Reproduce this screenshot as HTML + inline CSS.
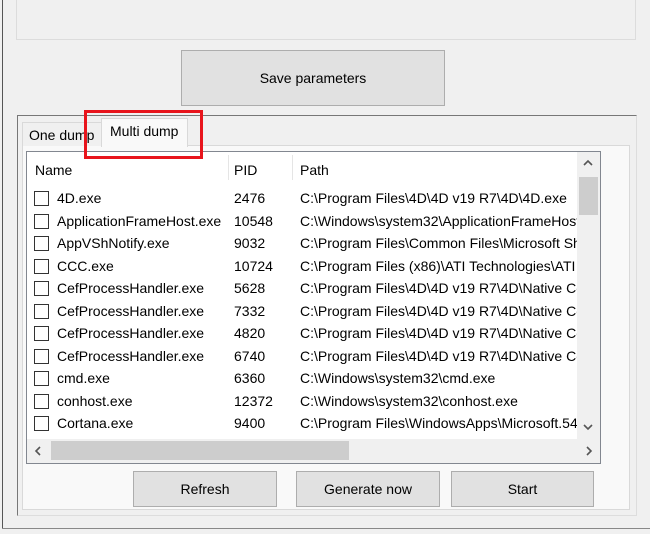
<!DOCTYPE html>
<html><head><style>
body{margin:0;width:650px;height:534px;background:#f0f0f0;position:relative;overflow:hidden;font-family:"Liberation Sans",sans-serif;font-size:14px;color:#000}
.a{position:absolute}
.btn{position:absolute;background:#e1e1e1;border:1px solid #adadad;box-sizing:border-box;display:flex;align-items:center;justify-content:center;font-size:14px}
.row{position:absolute;left:0;height:22px;width:560px}
.row span{position:absolute;top:3px;white-space:nowrap}
.cb{position:absolute;left:7px;top:4px;width:13px;height:13px;border:1px solid #333;background:#fff}
</style></head><body>
<div class="a" style="left:2px;top:0;width:1px;height:529px;background:#555"></div>
<div class="a" style="left:2px;top:528px;width:648px;height:1px;background:#888"></div>
<div class="a" style="left:16px;top:-2px;width:620px;height:42px;border:1px solid #dcdcdc;box-sizing:border-box"></div>
<div class="btn" style="left:181px;top:50px;width:264px;height:56px">Save parameters</div>
<div class="a" style="left:17px;top:115px;width:620px;height:401px;border-top:1px solid #777;border-left:1px solid #777;border-right:1px solid #ddd;border-bottom:1px solid #ddd;box-sizing:border-box"></div>
<div class="a" style="left:22px;top:145px;width:608px;height:365px;background:#f9f9f9;border:1px solid #d9d9d9;box-sizing:border-box"></div>
<div class="a" style="left:22px;top:122px;width:80px;height:24px;border:1px solid #d9d9d9;border-bottom:none;box-sizing:border-box;background:#f0f0f0;padding:4px 0 0 6px">One dump</div>
<div class="a" style="left:101px;top:118px;width:87px;height:29px;border:1px solid #d9d9d9;border-bottom:none;box-sizing:border-box;background:#f9f9f9;padding:4px 0 0 8px">Multi dump</div>
<div class="a" style="left:26px;top:151px;width:575px;height:313px;border:1px solid #828790;background:#fff;box-sizing:border-box;overflow:hidden">
 <div class="a" style="left:8px;top:10px">Name</div>
 <div class="a" style="left:201px;top:3px;width:1px;height:25px;background:#e5e5e5"></div>
 <div class="a" style="left:207px;top:10px">PID</div>
 <div class="a" style="left:265px;top:3px;width:1px;height:25px;background:#e5e5e5"></div>
 <div class="a" style="left:273px;top:10px">Path</div>
 <div class="a" style="left:0;top:35px;width:550px;height:252px;overflow:hidden">
  <div class="row" style="top:0"><div class="cb"></div><span style="left:30px">4D.exe</span><span style="left:207px">2476</span><span style="left:273px">C:\Program Files\4D\4D v19 R7\4D\4D.exe</span></div>
  <div class="row" style="top:22.5px"><div class="cb"></div><span style="left:30px">ApplicationFrameHost.exe</span><span style="left:207px">10548</span><span style="left:273px">C:\Windows\system32\ApplicationFrameHost.exe</span></div>
  <div class="row" style="top:45px"><div class="cb"></div><span style="left:30px">AppVShNotify.exe</span><span style="left:207px">9032</span><span style="left:273px">C:\Program Files\Common Files\Microsoft Shared</span></div>
  <div class="row" style="top:67.5px"><div class="cb"></div><span style="left:30px">CCC.exe</span><span style="left:207px">10724</span><span style="left:273px">C:\Program Files (x86)\ATI Technologies\ATI</span></div>
  <div class="row" style="top:90px"><div class="cb"></div><span style="left:30px">CefProcessHandler.exe</span><span style="left:207px">5628</span><span style="left:273px">C:\Program Files\4D\4D v19 R7\4D\Native Comp</span></div>
  <div class="row" style="top:112.5px"><div class="cb"></div><span style="left:30px">CefProcessHandler.exe</span><span style="left:207px">7332</span><span style="left:273px">C:\Program Files\4D\4D v19 R7\4D\Native Comp</span></div>
  <div class="row" style="top:135px"><div class="cb"></div><span style="left:30px">CefProcessHandler.exe</span><span style="left:207px">4820</span><span style="left:273px">C:\Program Files\4D\4D v19 R7\4D\Native Comp</span></div>
  <div class="row" style="top:157.5px"><div class="cb"></div><span style="left:30px">CefProcessHandler.exe</span><span style="left:207px">6740</span><span style="left:273px">C:\Program Files\4D\4D v19 R7\4D\Native Comp</span></div>
  <div class="row" style="top:180px"><div class="cb"></div><span style="left:30px">cmd.exe</span><span style="left:207px">6360</span><span style="left:273px">C:\Windows\system32\cmd.exe</span></div>
  <div class="row" style="top:202.5px"><div class="cb"></div><span style="left:30px">conhost.exe</span><span style="left:207px">12372</span><span style="left:273px">C:\Windows\system32\conhost.exe</span></div>
  <div class="row" style="top:225px"><div class="cb"></div><span style="left:30px">Cortana.exe</span><span style="left:207px">9400</span><span style="left:273px">C:\Program Files\WindowsApps\Microsoft.549</span></div>
  <div class="row" style="top:247.5px"><div class="cb"></div><span style="left:30px">dllhost.exe</span></div>
 </div>
 <div class="a" style="left:550px;top:0;width:23px;height:287px;background:#f0f0f0"></div>
 <div class="a" style="left:552px;top:25px;width:19px;height:38px;background:#cdcdcd"></div>
 <svg class="a" style="left:555px;top:6px" width="12" height="10"><path d="M2 7 L6 3 L10 7" stroke="#555" stroke-width="1.6" fill="none"/></svg>
 <svg class="a" style="left:555px;top:270px" width="12" height="10"><path d="M2 3 L6 7 L10 3" stroke="#555" stroke-width="1.6" fill="none"/></svg>
 <div class="a" style="left:0;top:287px;width:573px;height:24px;background:#f0f0f0"></div>
 <div class="a" style="left:24px;top:289px;width:298px;height:19px;background:#cdcdcd"></div>
 <svg class="a" style="left:6px;top:293px" width="10" height="12"><path d="M7 2 L3 6 L7 10" stroke="#555" stroke-width="1.6" fill="none"/></svg>
 <svg class="a" style="left:557px;top:293px" width="10" height="12"><path d="M3 2 L7 6 L3 10" stroke="#555" stroke-width="1.6" fill="none"/></svg>
</div>
<div class="btn" style="left:133px;top:471px;width:144px;height:36px">Refresh</div>
<div class="btn" style="left:296px;top:471px;width:144px;height:36px">Generate now</div>
<div class="btn" style="left:451px;top:471px;width:143px;height:36px">Start</div>
<div class="a" style="left:84px;top:110px;width:119px;height:49px;border:3px solid #e8141c;box-sizing:border-box"></div>
</body></html>
